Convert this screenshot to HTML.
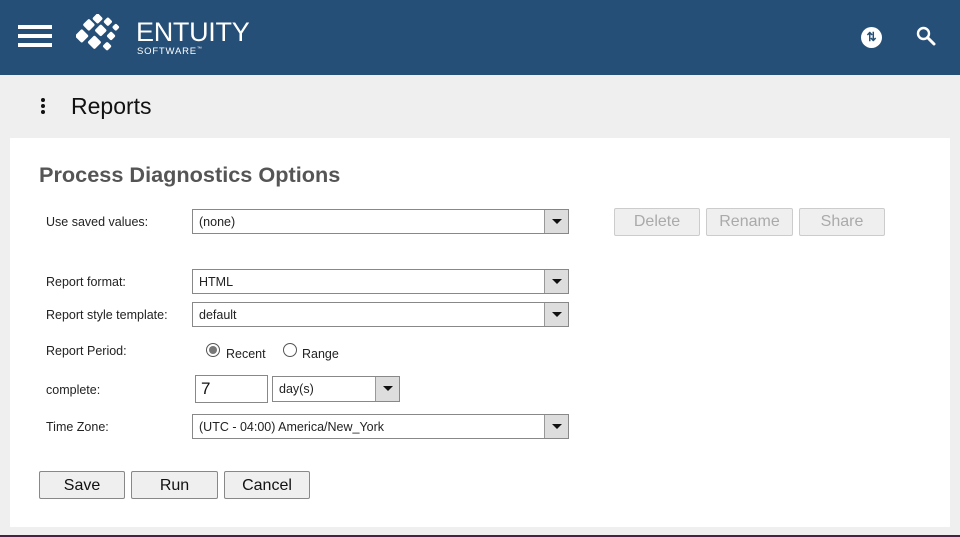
<!DOCTYPE html>
<html><head><style>
*{box-sizing:border-box;margin:0;padding:0}
body{width:960px;height:537px;background:#efefef;font-family:"Liberation Sans",sans-serif;position:relative;overflow:hidden}
.hdr{position:absolute;left:0;top:0;width:960px;height:75px;background:#264f77}
.abs{position:absolute}
.ham div{position:absolute;left:0;width:34px;height:4px;background:#fff}
.panel{position:absolute;left:10px;top:138px;width:940px;height:389px;background:#fff}
.lbl{position:absolute;left:46px;font-size:12.5px;color:#222}
.sel{position:absolute;left:192px;width:377px;height:25px;border:1px solid #888;background:#fff;font-size:12.5px;padding:5px 6px;color:#222}
.sel .ar{position:absolute;right:0;top:0;width:24px;height:23px;background:#ddd;border-left:1px solid #999}
.sel .ar:after{content:"";position:absolute;left:7px;top:9px;border-left:5px solid transparent;border-right:5px solid transparent;border-top:5px solid #111}
.gb{position:absolute;top:208px;height:28px;border:1px solid #ccc;background:#efefef;color:#aaa;font-size:16px;text-align:center;line-height:26px;border-radius:2px}
.bb{position:absolute;top:471px;height:28px;border:1px solid #888;background:#efefef;color:#111;font-size:16px;text-align:center;line-height:28px;border-radius:2px}
.radio{position:absolute;width:14px;height:14px;border:1px solid #555;border-radius:50%;background:#fff}
</style></head><body>
<div class="hdr">
 <div class="abs ham" style="left:18px;top:25px"><div style="top:0"></div><div style="top:9px"></div><div style="top:18px"></div></div>
 <svg class="abs" style="left:76px;top:14px" width="52" height="46" viewBox="0 0 52 46" fill="#fff">
  <g transform="translate(-2,2) rotate(45 25 23) scale(1.12) translate(-3,-3)">
   <rect x="8" y="8" width="7" height="7" rx="1.5"/><rect x="17" y="4" width="6" height="6" rx="1.5"/><rect x="26" y="3" width="5" height="5" rx="1.5"/>
   <rect x="6" y="17" width="8" height="8" rx="1.5"/><rect x="17" y="13" width="8" height="8" rx="1.5"/><rect x="28" y="11" width="6" height="6" rx="1.5"/>
   <rect x="8" y="28" width="9" height="9" rx="1.5"/><rect x="20" y="24" width="9" height="9" rx="1.5"/><rect x="32" y="20" width="6" height="6" rx="1.5"/>
  </g>
 </svg>
 <div class="abs" style="left:136px;top:17px;color:#fff;font-size:27px;letter-spacing:-0.3px">ENTUITY</div>
 <div class="abs" style="left:137px;top:46px;color:#fff;font-size:9.5px;letter-spacing:0.8px">SOFTWARE<sup style="font-size:5px">™</sup></div>
 <div class="abs" style="left:861px;top:27px;width:21px;height:21px;border-radius:50%;background:#fff;color:#264f77;font-size:12px;font-weight:bold;text-align:center;line-height:21px">⇅</div>
 <svg class="abs" style="left:916px;top:26px" width="20" height="20" viewBox="0 0 20 20"><circle cx="7.5" cy="7.5" r="5.5" stroke="#fff" stroke-width="2.4" fill="none"/><path d="M11.5 11.5L18 18" stroke="#fff" stroke-width="3" stroke-linecap="round"/></svg>
</div>
<div class="abs" style="left:41px;top:98px;width:4px;height:4px;background:#111;border-radius:50%;box-shadow:0 6px 0 #111,0 12px 0 #111"></div>
<div class="abs" style="left:71px;top:93px;font-size:23px;color:#111">Reports</div>
<div class="panel"></div>
<div class="abs" style="left:39px;top:162px;font-size:21.7px;font-weight:bold;color:#555">Process Diagnostics Options</div>
<div class="lbl" style="top:215px">Use saved values:</div>
<div class="sel" style="top:209px">(none)<div class="ar"></div></div>
<div class="gb" style="left:614px;width:86px">Delete</div>
<div class="gb" style="left:706px;width:87px">Rename</div>
<div class="gb" style="left:799px;width:86px">Share</div>
<div class="lbl" style="top:275px">Report format:</div>
<div class="sel" style="top:269px">HTML<div class="ar"></div></div>
<div class="lbl" style="top:308px">Report style template:</div>
<div class="sel" style="top:302px">default<div class="ar"></div></div>
<div class="lbl" style="top:344px">Report Period:</div>
<div class="radio" style="left:206px;top:343px"><div style="position:absolute;left:2px;top:2px;width:8px;height:8px;border-radius:50%;background:#777"></div></div>
<div class="abs" style="left:226px;top:347px;font-size:12.5px;color:#222">Recent</div>
<div class="radio" style="left:283px;top:343px"></div>
<div class="abs" style="left:302px;top:347px;font-size:12.5px;color:#222">Range</div>
<div class="lbl" style="top:383px">complete:</div>
<div class="abs" style="left:195px;top:375px;width:73px;height:28px;border:1px solid #888;font-size:17px;padding:3px 5px;color:#111">7</div>
<div class="sel" style="left:272px;top:376px;width:128px;height:26px">day(s)<div class="ar" style="height:24px"></div></div>
<div class="lbl" style="top:420px">Time Zone:</div>
<div class="sel" style="top:414px">(UTC - 04:00) America/New_York<div class="ar"></div></div>
<div class="bb" style="left:39px;width:86px">Save</div>
<div class="bb" style="left:131px;width:87px">Run</div>
<div class="bb" style="left:224px;width:86px">Cancel</div>
<div class="abs" style="left:0;top:535px;width:960px;height:2px;background:#4a2040"></div>
</body></html>
